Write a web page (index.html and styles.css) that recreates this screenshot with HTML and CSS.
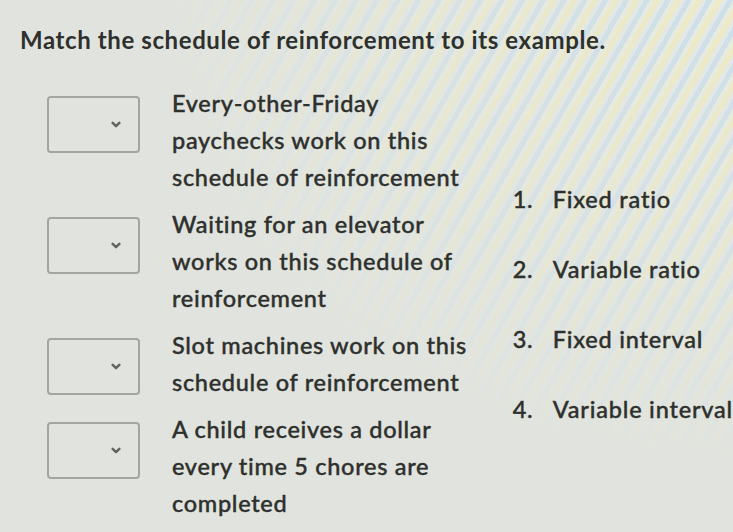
FILE: index.html
```html
<!DOCTYPE html>
<html lang="en">
<head>
<meta charset="utf-8">
<title>Schedules of reinforcement</title>
<link rel="stylesheet" href="styles.css">
</head>
<body>
<main class="question">
  <h1 class="prompt">Match the schedule of reinforcement to its example.</h1>
  <div class="match">
    <div class="items">
      <div class="item">
        <div class="select"><svg class="chev" viewBox="0 0 12 8" width="10" height="7"><path d="M2 2 L6 6 L10 2"/></svg></div>
        <p class="example">Every-other-Friday<br>paychecks work on this<br>schedule of reinforcement</p>
      </div>
      <div class="item">
        <div class="select"><svg class="chev" viewBox="0 0 12 8" width="10" height="7"><path d="M2 2 L6 6 L10 2"/></svg></div>
        <p class="example">Waiting for an elevator<br>works on this schedule of<br>reinforcement</p>
      </div>
      <div class="item">
        <div class="select"><svg class="chev" viewBox="0 0 12 8" width="10" height="7"><path d="M2 2 L6 6 L10 2"/></svg></div>
        <p class="example">Slot machines work on this<br>schedule of reinforcement</p>
      </div>
      <div class="item">
        <div class="select"><svg class="chev" viewBox="0 0 12 8" width="10" height="7"><path d="M2 2 L6 6 L10 2"/></svg></div>
        <p class="example">A child receives a dollar<br>every time 5 chores are<br>completed</p>
      </div>
    </div>
    <ol class="choices">
      <li><span class="num">1.</span><span>Fixed ratio</span></li>
      <li><span class="num">2.</span><span>Variable ratio</span></li>
      <li><span class="num">3.</span><span>Fixed interval</span></li>
      <li><span class="num">4.</span><span>Variable interval</span></li>
    </ol>
  </div>
</main>
</body>
</html>
```

FILE: styles.css
```css
html, body {
  margin: 0;
  height: 100%;
  overflow: hidden;
}

body {
  font-family: Lato, "Open Sans", sans-serif;
  color: #2e302d;
  background:
    radial-gradient(ellipse 580px 470px at 100% 0%, rgba(225, 228, 222, 0) 0%, rgba(225, 228, 222, 0.45) 50%, #e1e4de 100%),
    repeating-linear-gradient(120deg, #cddfea 0 5px, #e8ecdf 5px 9px, #efeac2 9px 14px, #e3e9e7 14px 18px);
}

.question {
  padding: 25px 0 0 20px;
}

.prompt {
  margin: 0;
  font-size: 24px;
  line-height: 30px;
  font-weight: 700;
  letter-spacing: 0.6px;
}

.match {
  display: flex;
  align-items: center;
  margin-top: 30px;
}

.items {
  width: 495px;
  display: flex;
  flex-direction: column;
  gap: 10px;
}

.item {
  display: flex;
  align-items: flex-start;
}

.select {
  box-sizing: border-box;
  width: 93px;
  height: 57px;
  margin: 11px 0 0 27px;
  border: 2px solid #a3a6a0;
  border-radius: 4px;
  display: flex;
  align-items: center;
  justify-content: flex-end;
  padding-right: 17px;
}

.chev {
  display: block;
  fill: none;
  stroke: #62655f;
  stroke-width: 3;
  stroke-linecap: round;
  stroke-linejoin: round;
}

.example {
  margin: 0 0 0 32px;
  font-size: 23.5px;
  font-weight: 500;
  letter-spacing: 0.7px;
  line-height: 37px;
  white-space: nowrap;
  -webkit-text-stroke: 0.4px currentColor;
}

.choices {
  list-style: none;
  margin: 0;
  padding: 0;
  display: flex;
  flex-direction: column;
  gap: 40px;
  font-size: 23.5px;
  font-weight: 500;
  letter-spacing: 0.8px;
  line-height: 30px;
  white-space: nowrap;
  -webkit-text-stroke: 0.4px currentColor;
}

.choices li {
  display: flex;
}

.num {
  width: 40px;
}
```
